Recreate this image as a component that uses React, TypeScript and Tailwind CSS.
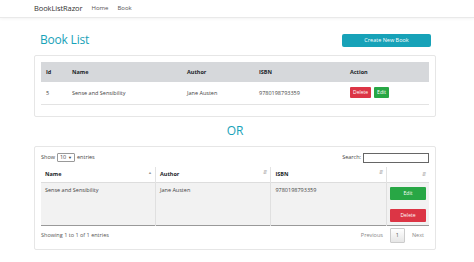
import React from 'react';

const font = { fontFamily: '"Open Sans", "Noto Sans", sans-serif' };

function SortIcon() {
  return <span className="text-[5px] text-[#bbb] leading-none">⇵</span>;
}

export default function App() {
  return (
    <div className="w-[474px] h-[262px] bg-white text-[#212529] overflow-hidden" style={font}>
      {/* Navbar */}
      <nav className="h-[18px] flex items-center pl-[34px] gap-[9px] border-b border-[#e9e9e9] shadow-[0_1px_3px_rgba(0,0,0,0.05)]">
        <span className="text-[7.5px] font-normal text-[#333] tracking-[-0.1px]">BookListRazor</span>
        <span className="text-[6px] text-[#555]">Home</span>
        <span className="text-[6px] text-[#555]">Book</span>
      </nav>

      <div className="ml-[34px] w-[402px]">
        {/* Header row */}
        <div className="flex items-center justify-between mt-[15px] h-[14px] pl-[6px] pr-[5px]">
          <h1 className="text-[12px] font-medium text-[#17a2b8] leading-none tracking-[-0.2px]">Book List</h1>
          <button className="w-[89px] h-[13px] rounded-[2px] bg-[#17a2b8] text-white text-[5.5px]">Create New Book</button>
        </div>

        {/* Card 1 */}
        <div className="mt-[8px] border border-[#e6e6e6] rounded-[2px] px-[6px] pt-[6px] pb-[11px]">
          <table className="w-full text-[5.5px] border-collapse">
            <thead>
              <tr className="bg-[#d6d8db] h-[20px] text-left">
                <th className="pl-[5px] w-[31px] font-bold">Id</th>
                <th className="w-[115px] font-bold">Name</th>
                <th className="w-[72px] font-bold">Author</th>
                <th className="w-[91px] font-bold">ISBN</th>
                <th className="font-bold">Action</th>
              </tr>
            </thead>
            <tbody>
              <tr className="h-[22px] border-b border-[#e3e3e3] text-[#444]">
                <td className="pl-[5px]">5</td>
                <td>Sense and Sensibility</td>
                <td>Jane Austen</td>
                <td>9780198793359</td>
                <td>
                  <div className="flex gap-[3px]">
                    <button className="h-[11px] px-[3px] rounded-[1px] bg-[#dc3545] text-white text-[5px]">Delete</button>
                    <button className="h-[11px] px-[3px] rounded-[1px] bg-[#28a745] text-white text-[5px]">Edit</button>
                  </div>
                </td>
              </tr>
            </tbody>
          </table>
        </div>

        {/* OR */}
        <div className="text-center text-[12px] text-[#17a2b8] mt-[8px] leading-none h-[12px]">OR</div>

        {/* Card 2 */}
        <div className="mt-[9px] border border-[#e6e6e6] rounded-[2px] px-[6px] pt-[6px] pb-[6px]">
          <div className="flex items-center justify-between h-[10px] text-[5.5px] text-[#444]">
            <div className="flex items-center gap-[2px]">
              <span>Show</span>
              <span className="border border-[#999] h-[9px] w-[18px] flex items-center justify-between px-[2px] text-[5.5px] rounded-[1px]">
                10 <span className="text-[4px]">▼</span>
              </span>
              <span>entries</span>
            </div>
            <div className="flex items-center gap-[2px]">
              <span>Search:</span>
              <span className="border border-[#666] w-[66px] h-[10px] block" />
            </div>
          </div>

          <table className="w-full mt-[4px] text-[5.5px] border-collapse">
            <thead>
              <tr className="h-[16px] text-left border-b border-[#ddd]">
                <th className="w-[115px] pl-[4px] font-bold border-r border-[#e3e3e3]">
                  <div className="flex justify-between pr-[3px]"><span>Name</span><span className="text-[4px] text-[#999]">▲</span></div>
                </th>
                <th className="w-[116px] pl-[4px] font-bold border-r border-[#e3e3e3]">
                  <div className="flex justify-between pr-[3px]"><span>Author</span><SortIcon /></div>
                </th>
                <th className="w-[116px] pl-[4px] font-bold border-r border-[#e3e3e3]">
                  <div className="flex justify-between pr-[3px]"><span>ISBN</span><SortIcon /></div>
                </th>
                <th className="pr-[3px] text-right"><SortIcon /></th>
              </tr>
            </thead>
            <tbody>
              <tr className="h-[43px] bg-[#f2f2f2] border-b border-[#999] text-[#444] align-top">
                <td className="pl-[4px] pt-[3px] border-r border-[#e0e0e0]">Sense and Sensibility</td>
                <td className="pl-[4px] pt-[3px] border-r border-[#e0e0e0]">Jane Austen</td>
                <td className="pl-[4px] pt-[3px] border-r border-[#e0e0e0]">9780198793359</td>
                <td className="pt-[4px] px-[3px]">
                  <div className="flex flex-col gap-[9px] items-center pb-[3px]">
                    <button className="w-[36px] h-[13px] rounded-[1px] bg-[#28a745] text-white text-[5px]">Edit</button>
                    <button className="w-[36px] h-[13px] rounded-[1px] bg-[#dc3545] text-white text-[5px]">Delete</button>
                  </div>
                </td>
              </tr>
            </tbody>
          </table>

          <div className="flex items-center justify-between h-[16px] mt-[1px] text-[5.5px] text-[#555]">
            <span>Showing 1 to 1 of 1 entries</span>
            <div className="flex items-center gap-[7px] pr-[5px]">
              <span className="text-[#888]">Previous</span>
              <span className="w-[15px] h-[15px] border border-[#ccc] rounded-[1px] bg-gradient-to-b from-white to-[#e6e6e6] flex items-center justify-center">1</span>
              <span className="text-[#888]">Next</span>
            </div>
          </div>
        </div>
      </div>
    </div>
  );
}
